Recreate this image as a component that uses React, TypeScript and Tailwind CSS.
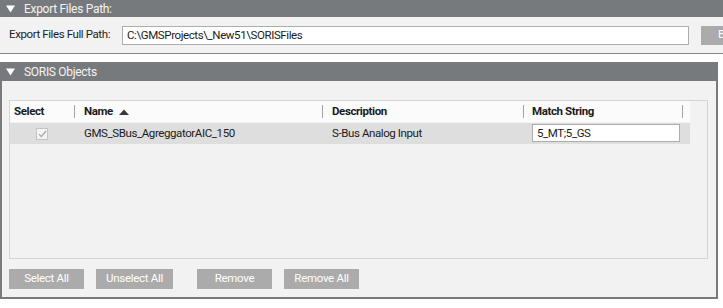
import { useState } from 'react'

const font = { fontFamily: 'Roboto, "Liberation Sans", sans-serif' }

function Caret() {
  return (
    <svg width="9" height="8" viewBox="0 0 9 8" className="shrink-0">
      <path d="M0 0.5 L9 0.5 L4.5 7.5 Z" fill="#ffffff" />
    </svg>
  )
}

function SectionHeader({ title, tall }: { title: string; tall?: boolean }) {
  return (
    <div className={`flex items-center bg-[#777a7c] pl-[6px] text-[12px] tracking-[-0.3px] text-[#f4f4f4] ${tall ? 'h-[19px]' : 'h-[17px]'}`}>
      <Caret />
      <span className="ml-[9px]">{title}</span>
    </div>
  )
}

function Divider() {
  return <div className="h-[13px] w-px shrink-0 bg-[#a3a3a3]" />
}

function GrayButton({ label, width }: { label: string; width: string }) {
  return (
    <button className={`h-[20px] ${width} shrink-0 bg-[#ababab] text-[11.5px] tracking-[-0.3px] text-white`}>
      {label}
    </button>
  )
}

export default function App() {
  const [path, setPath] = useState('C:\\GMSProjects\\_New51\\SORISFiles')
  const [match, setMatch] = useState('5_MT;5_GS')

  return (
    <div className="h-[308px] w-[723px] overflow-hidden bg-white text-[11.5px] tracking-[-0.4px] text-[#1b1b1b]" style={font}>
      {/* export path */}
      <SectionHeader title="Export Files Path:" />
      <div className="flex h-[37px] items-center overflow-hidden border-b border-[#858585] bg-[#f2f2f2] pl-[9px]">
        <span className="w-[113px] shrink-0 whitespace-nowrap">Export Files Full Path:</span>
        <input
          value={path}
          onChange={(e) => setPath(e.target.value)}
          className="h-[19px] w-[567px] shrink-0 border border-[#adadad] bg-white px-[4px] text-[11.5px] tracking-[-0.4px] text-[#1b1b1b] outline-none"
        />
        <button className="ml-[12px] h-[19px] w-[40px] shrink-0 overflow-hidden whitespace-nowrap bg-[#ababab] pl-[17px] text-left text-[11.5px] text-white">
          B
        </button>
      </div>

      {/* soris objects */}
      <div className="mt-[8px] w-[718px]">
        <SectionHeader title="SORIS Objects" tall />
        <div className="border-x-2 border-b-2 border-[#7a7a7a] bg-[#f2f2f2] pb-[8px] pl-[7px] pr-[8px] pt-[19px]">
          <div className="h-[159px] border border-[#d4d4d4] bg-[#f2f2f2]">
            <div className="flex h-[21px] w-[680px] items-center bg-[#fbfbfb] font-bold text-[#1a1a1a]">
              <div className="w-[64px] shrink-0 pl-[4px]">Select</div>
              <Divider />
              <div className="flex w-[247px] shrink-0 items-center pl-[9px]">
                Name
                <svg width="10" height="6" viewBox="0 0 10 6" className="ml-[6px]">
                  <path d="M0 6 L5 0.5 L10 6 Z" fill="#3a3a3a" />
                </svg>
              </div>
              <Divider />
              <div className="w-[200px] shrink-0 pl-[9px]">Description</div>
              <Divider />
              <div className="w-[158px] shrink-0 pl-[8px]">Match String</div>
              <Divider />
            </div>
            <div className="mt-px flex h-[21px] w-[680px] items-center bg-[#dedede]">
              <div className="flex w-[64px] shrink-0 justify-center">
                <div className="flex h-[12px] w-[12px] items-center justify-center border border-[#c4c4c4] bg-[#f4f4f4]">
                  <svg width="9" height="8" viewBox="0 0 9 8">
                    <path d="M1 4.2 L3.4 6.6 L8 1" stroke="#a8a8a8" strokeWidth="1.3" fill="none" />
                  </svg>
                </div>
              </div>
              <div className="w-[248px] shrink-0 pl-[10px]">GMS_SBus_AgreggatorAIC_150</div>
              <div className="w-[201px] shrink-0 pl-[10px]">S-Bus Analog Input</div>
              <div className="shrink-0 pl-[9px]">
                <input
                  value={match}
                  onChange={(e) => setMatch(e.target.value)}
                  className="h-[18px] w-[148px] border border-[#adadad] bg-white px-[4px] text-[11.5px] tracking-[-0.4px] text-[#1b1b1b] outline-none"
                />
              </div>
            </div>
          </div>
          <div className="mt-[10px] flex items-center">
            <GrayButton label="Select All" width="w-[75px]" />
            <div className="ml-[12px]">
              <GrayButton label="Unselect All" width="w-[77px]" />
            </div>
            <div className="ml-[24px]">
              <GrayButton label="Remove" width="w-[75px]" />
            </div>
            <div className="ml-[12px]">
              <GrayButton label="Remove All" width="w-[75px]" />
            </div>
          </div>
        </div>
      </div>
    </div>
  )
}
